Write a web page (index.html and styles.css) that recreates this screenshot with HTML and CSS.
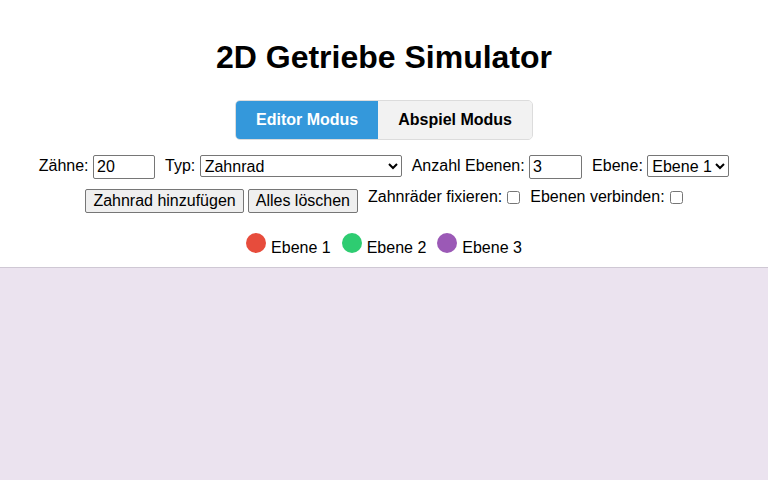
FILE: index.html
```html
<!DOCTYPE html>
<html lang="de">
<head>
<meta charset="utf-8">
<title>2D Getriebe Simulator</title>
<link rel="stylesheet" href="styles.css">
</head>
<body>
<h1 class="title">2D Getriebe Simulator</h1>
<div class="tabs">
  <button class="tab tab-active">Editor Modus</button>
  <button class="tab">Abspiel Modus</button>
</div>
<div class="controls">
  <div class="group"><label>Zähne: </label><input class="inp inp-teeth" type="text" value="20"></div>
  <div class="group"><label>Typ: </label><select class="sel sel-type"><option>Zahnrad</option></select></div>
  <div class="group"><label>Anzahl Ebenen: </label><input class="inp inp-layers" type="text" value="3"></div>
  <div class="group"><label>Ebene: </label><select class="sel sel-layer"><option>Ebene 1</option></select></div>
  <div class="group group-buttons"><button class="btn">Zahnrad hinzufügen</button><button class="btn">Alles löschen</button></div>
  <div class="group group-top"><label>Zahnräder fixieren:</label><input class="chk" type="checkbox"></div>
  <div class="group group-top"><label>Ebenen verbinden:</label><input class="chk" type="checkbox"></div>
</div>
<div class="legend">
  <span class="legend-item"><span class="dot dot-red"></span>Ebene 1</span>
  <span class="legend-item"><span class="dot dot-green"></span>Ebene 2</span>
  <span class="legend-item"><span class="dot dot-purple"></span>Ebene 3</span>
</div>
<div class="canvas"></div>
</body>
</html>
```

FILE: styles.css
```css
html, body {
  margin: 0;
  padding: 0;
  height: 100%;
}
body {
  font-family: "Liberation Sans", Arial, sans-serif;
  font-size: 16px;
  color: #000;
  background: #fff;
  display: flex;
  flex-direction: column;
  overflow: hidden;
}
.title {
  font-size: 32px;
  font-weight: bold;
  text-align: center;
  margin: 39px 0 24px;
  line-height: 37px;
}
.tabs {
  align-self: center;
  display: flex;
  border: 1px solid #dcdcdc;
  border-radius: 5px;
  overflow: hidden;
  background: #f2f2f2;
}
.tab {
  font-family: "Liberation Sans", Arial, sans-serif;
  font-size: 16px;
  font-weight: bold;
  border: none;
  background: #f2f2f2;
  color: #000;
  padding: 10px 20px;
  line-height: 18px;
  margin: 0;
}
.tab-active {
  background: #3498db;
  color: #fff;
}
.controls {
  display: flex;
  flex-wrap: wrap;
  justify-content: center;
  column-gap: 10px;
  row-gap: 10px;
  margin: 15px 30px 0;
}
.group {
  display: flex;
  align-items: flex-start;
  white-space: pre;
}
.group-buttons {
  gap: 4px;
}
.group label {
  line-height: 18px;
  padding-top: 2px;
}
.group-top label {
  padding-top: 0;
  margin-top: -1px;
}
.inp {
  font-family: "Liberation Sans", Arial, sans-serif;
  font-size: 16px;
  border: 1px solid #767676;
  border-radius: 2px;
  padding: 2px 3px;
  height: 24px;
  box-sizing: border-box;
  margin: 0;
}
.inp-teeth { width: 62px; }
.inp-layers { width: 53px; }
.sel {
  font-family: "Liberation Sans", Arial, sans-serif;
  font-size: 16px;
  height: 22px;
  box-sizing: border-box;
  border: 1px solid #767676;
  border-radius: 2px;
  background: #fff;
  margin: 0;
  padding: 0;
}
.sel-type { width: 202px; }
.sel-layer { width: 82px; }
.btn {
  font-family: "Liberation Sans", Arial, sans-serif;
  font-size: 16px;
  height: 24px;
  padding: 1px 7px;
  border: 1px solid #767676;
  border-radius: 2px;
  background: #efefef;
  color: #000;
  margin: 0;
}
.chk {
  width: 13px;
  height: 13px;
  margin: 2px 0 0 5px;
}
.legend {
  display: flex;
  justify-content: center;
  gap: 11px;
  margin: 20px 0 10px;
}
.legend-item {
  display: block;
}
.dot {
  display: inline-block;
  width: 20px;
  height: 20px;
  border-radius: 50%;
  margin-right: 5px;
}
.dot-red { background: #e74c3c; }
.dot-green { background: #2ecc71; }
.dot-purple { background: #9b59b6; }
.canvas {
  flex: 1;
  border-top: 1px solid #cfc8d4;
  background: #ebe3ef;
}
```
